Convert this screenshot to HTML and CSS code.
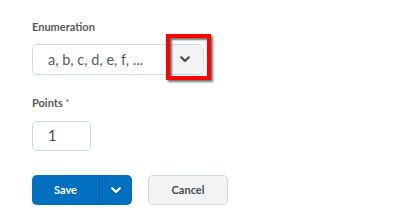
FILE: index.html
```html
<!DOCTYPE html>
<html lang="en">
<head>
    <meta charset="UTF-8">
    <title>Question Settings</title>
    <link rel="stylesheet" href="styles.css">
</head>
<body>

    <!-- Enumeration dropdown -->
    <div class="field">
        <label class="field-label">Enumeration</label>
        <div class="select-wrap">
            <div class="select">
                <span class="select-value">a, b, c, d, e, f, ...</span>
                <span class="select-btn">
                    <svg width="10" height="7" viewBox="0 0 10 7"><path d="M1.2 1.3 L5 5 L8.8 1.3" fill="none" stroke="#494c4e" stroke-width="2.2" stroke-linecap="round" stroke-linejoin="round"/></svg>
                </span>
            </div>
            <div class="highlight"></div>
        </div>
    </div>

    <!-- Points -->
    <div class="field points">
        <label class="field-label">Points <span class="req">*</span></label>
        <div class="input-box">1</div>
    </div>

    <!-- Actions -->
    <div class="actions">
        <div class="btn-split">
            <span class="btn-save">Save</span>
            <span class="btn-more">
                <svg width="10" height="7" viewBox="0 0 10 7"><path d="M1.2 1.3 L5 5 L8.8 1.3" fill="none" stroke="#ffffff" stroke-width="2.2" stroke-linecap="round" stroke-linejoin="round"/></svg>
            </span>
        </div>
        <span class="btn-cancel">Cancel</span>
    </div>

</body>
</html>
```

FILE: styles.css
```css
body {
    font-family: Lato, "Open Sans", sans-serif;
    background-color: #ffffff;
    color: #494c4e;
    margin: 0;
    padding: 19px 0 0 32px;
}

.field-label {
    display: block;
    font-size: 11px;
    font-weight: 700;
    line-height: 16px;
    color: #565a5c;
    margin-bottom: 9px;
}

.req {
    font-size: 9px;
    vertical-align: top;
    font-weight: 400;
}

/* Enumeration select */
.select-wrap {
    position: relative;
    width: 172px;
}

.select {
    display: flex;
    height: 31px;
    box-sizing: border-box;
    border: 1px solid #d3d9e3;
    border-radius: 5px;
    overflow: hidden;
}

.select-value {
    flex: 1;
    padding-left: 15px;
    font-size: 14.5px;
    line-height: 29px;
    color: #565a5c;
}

.select-btn {
    width: 36px;
    display: flex;
    align-items: center;
    justify-content: center;
    background-color: #f1f3f4;
    border-left: 1px solid #d3d9e3;
}

/* Red annotation box */
.highlight {
    position: absolute;
    left: 134px;
    top: -10px;
    width: 37px;
    height: 38px;
    border: 4px solid #ff0000;
    box-shadow: 2px 2px 2px rgba(0, 0, 0, 0.55), inset 2px 2px 2px rgba(0, 0, 0, 0.55);
}

/* Points */
.points {
    margin-top: 20px;
}

.points .field-label {
    margin-bottom: 10px;
}

.input-box {
    width: 59px;
    height: 30px;
    box-sizing: border-box;
    border: 1px solid #d3d9e3;
    border-radius: 5px;
    padding-left: 15px;
    font-size: 14.5px;
    line-height: 28px;
    color: #494c4e;
}

/* Buttons */
.actions {
    display: flex;
    gap: 16px;
    margin-top: 24px;
}

.btn-split {
    display: flex;
    height: 30px;
    width: 100px;
    border-radius: 5px;
    background-color: #006fbf;
    overflow: hidden;
}

.btn-save {
    width: 67px;
    text-align: center;
    color: #ffffff;
    font-size: 11px;
    font-weight: 700;
    line-height: 30px;
    border-right: 1px solid #004f8a;
}

.btn-more {
    flex: 1;
    display: flex;
    align-items: center;
    justify-content: center;
}

.btn-cancel {
    width: 80px;
    height: 30px;
    box-sizing: border-box;
    border: 1px solid #d3d9e3;
    border-radius: 5px;
    background-color: #f1f3f4;
    text-align: center;
    font-size: 11px;
    font-weight: 700;
    line-height: 28px;
    color: #494c4e;
}
```
